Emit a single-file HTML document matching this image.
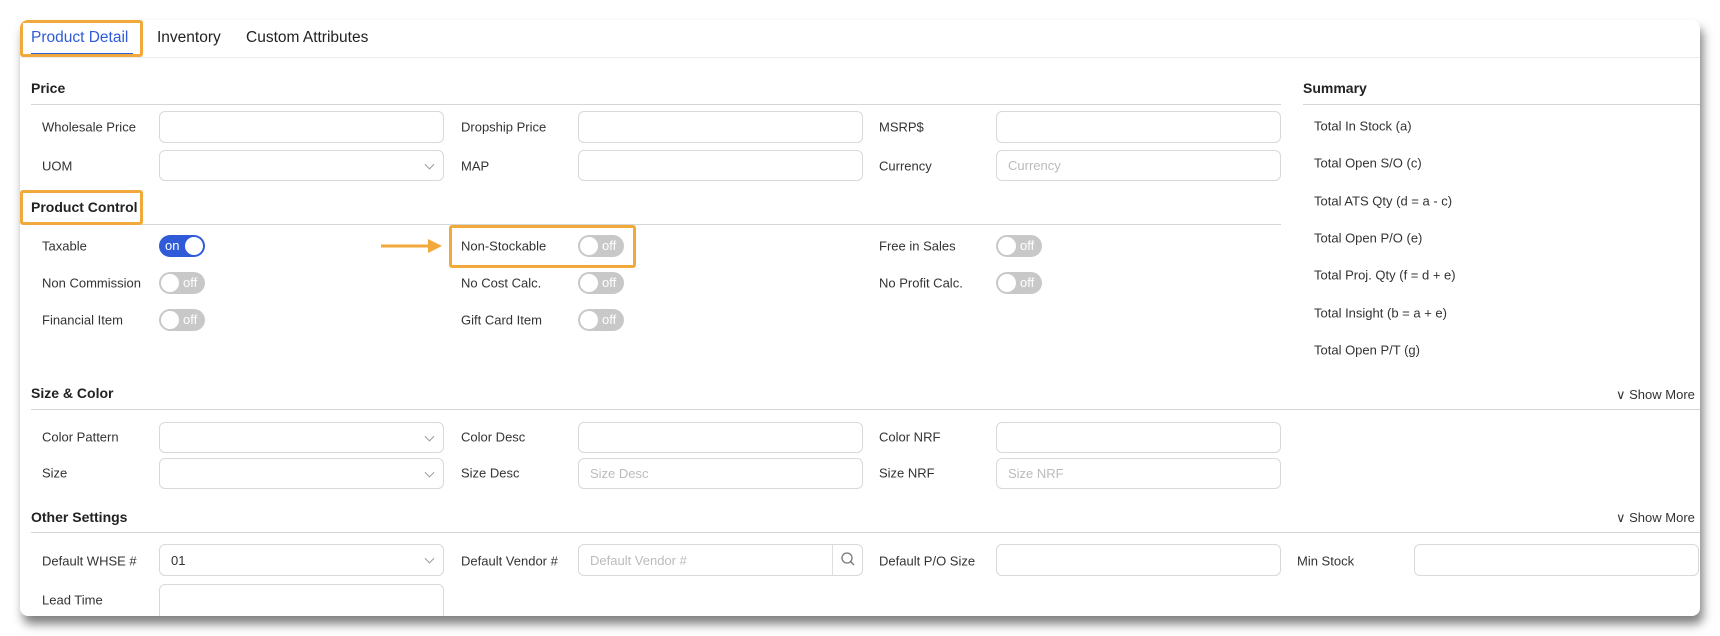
<!DOCTYPE html>
<html><head><meta charset="utf-8"><style>
*{box-sizing:border-box;margin:0;padding:0}
body{width:1720px;height:636px;background:#fff;position:relative;overflow:hidden;font-family:"Segoe UI","Liberation Sans",sans-serif;color:#333;font-size:13px}
.card{position:absolute;left:20px;top:20px;width:1680px;height:596px;background:#fff;border-radius:8px;box-shadow:3px 8px 10px rgba(0,0,0,.5);overflow:hidden}
.a{position:absolute;white-space:nowrap}
.lbl{position:absolute;font-size:13px;color:#333;transform:translateY(-50%)}
.h{position:absolute;font-weight:bold;font-size:14px;color:#222;transform:translateY(-50%)}
.line{position:absolute;height:1px;background:#d6d6d6}
.in{position:absolute;border:1px solid #d9d9d9;border-radius:6px;background:#fff;font-size:13px;color:#bbb;padding-left:11px;display:flex;align-items:center}
.chev{position:absolute;right:10px;top:50%;width:7px;height:7px;border-right:1px solid #999;border-bottom:1px solid #999;transform:translateY(-70%) rotate(45deg)}
.tg{position:absolute;width:46px;height:22px;border-radius:11px;background:#c8c8c8;color:#fff;font-size:13px;transform:translateY(-50%)}
.tg::before{content:"";position:absolute;left:2px;top:2px;width:18px;height:18px;border-radius:50%;background:#fff}
.tg span{position:absolute;left:24px;top:0;line-height:22px}
.tg.on{background:#2f5bd8}
.tg.on::before{left:26px}
.tg.on span{left:6px}
.ob{position:absolute;border:3px solid #f2a93b;border-radius:3px}
.sm{position:absolute;font-size:13px;color:#333;transform:translateY(-50%)}
</style></head><body>
<div class="card">
<div class="a" style="left:11px;top:9px;font-size:15.5px;color:#2f5bd8">Product Detail</div>
<div class="a" style="left:137px;top:9px;font-size:15.5px;color:#222">Inventory</div>
<div class="a" style="left:226px;top:9px;font-size:15.5px;color:#222">Custom Attributes</div>
<div class="a" style="left:11px;top:33px;width:102px;height:3px;background:#2f5bd8"></div>
<div class="line" style="left:0;top:37px;width:1680px;background:#ececec"></div>

<div class="h" style="left:11px;top:68px">Price</div>
<div class="line" style="left:11px;top:84px;width:1250px"></div>
<div class="h" style="left:1283px;top:68px">Summary</div>
<div class="line" style="left:1283px;top:84px;width:397px"></div>

<div class="lbl" style="left:22px;top:107px">Wholesale Price</div>
<div class="in" style="left:139px;top:91px;width:285px;height:32px"></div>
<div class="lbl" style="left:441px;top:107px">Dropship Price</div>
<div class="in" style="left:558px;top:91px;width:285px;height:32px"></div>
<div class="lbl" style="left:859px;top:107px">MSRP$</div>
<div class="in" style="left:976px;top:91px;width:285px;height:32px"></div>

<div class="lbl" style="left:22px;top:146px">UOM</div>
<div class="in" style="left:139px;top:130px;width:285px;height:31px"><i class="chev"></i></div>
<div class="lbl" style="left:441px;top:146px">MAP</div>
<div class="in" style="left:558px;top:130px;width:285px;height:31px"></div>
<div class="lbl" style="left:859px;top:146px">Currency</div>
<div class="in" style="left:976px;top:130px;width:285px;height:31px">Currency</div>

<div class="h" style="left:11px;top:187px">Product Control</div>
<div class="line" style="left:11px;top:204px;width:1250px"></div>

<div class="lbl" style="left:22px;top:226px">Taxable</div>
<div class="tg on" style="left:139px;top:226px"><span>on</span></div>
<div class="lbl" style="left:22px;top:263px">Non Commission</div>
<div class="tg" style="left:139px;top:263px"><span>off</span></div>
<div class="lbl" style="left:22px;top:300px">Financial Item</div>
<div class="tg" style="left:139px;top:300px"><span>off</span></div>

<div class="lbl" style="left:441px;top:226px">Non-Stockable</div>
<div class="tg" style="left:558px;top:226px"><span>off</span></div>
<div class="lbl" style="left:441px;top:263px">No Cost Calc.</div>
<div class="tg" style="left:558px;top:263px"><span>off</span></div>
<div class="lbl" style="left:441px;top:300px">Gift Card Item</div>
<div class="tg" style="left:558px;top:300px"><span>off</span></div>

<div class="lbl" style="left:859px;top:226px">Free in Sales</div>
<div class="tg" style="left:976px;top:226px"><span>off</span></div>
<div class="lbl" style="left:859px;top:263px">No Profit Calc.</div>
<div class="tg" style="left:976px;top:263px"><span>off</span></div>

<div class="sm" style="left:1294px;top:106px">Total In Stock (a)</div>
<div class="sm" style="left:1294px;top:143px">Total Open S/O (c)</div>
<div class="sm" style="left:1294px;top:181px">Total ATS Qty (d = a - c)</div>
<div class="sm" style="left:1294px;top:218px">Total Open P/O (e)</div>
<div class="sm" style="left:1294px;top:255px">Total Proj. Qty (f = d + e)</div>
<div class="sm" style="left:1294px;top:293px">Total Insight (b = a + e)</div>
<div class="sm" style="left:1294px;top:330px">Total Open P/T (g)</div>

<div class="h" style="left:11px;top:373px">Size &amp; Color</div>
<div class="sm" style="left:1596px;top:375px">∨ Show More</div>
<div class="line" style="left:11px;top:389px;width:1669px"></div>
<div class="lbl" style="left:22px;top:417px">Color Pattern</div>
<div class="in" style="left:139px;top:402px;width:285px;height:31px"><i class="chev"></i></div>
<div class="lbl" style="left:441px;top:417px">Color Desc</div>
<div class="in" style="left:558px;top:402px;width:285px;height:31px"></div>
<div class="lbl" style="left:859px;top:417px">Color NRF</div>
<div class="in" style="left:976px;top:402px;width:285px;height:31px"></div>
<div class="lbl" style="left:22px;top:453px">Size</div>
<div class="in" style="left:139px;top:438px;width:285px;height:31px"><i class="chev"></i></div>
<div class="lbl" style="left:441px;top:453px">Size Desc</div>
<div class="in" style="left:558px;top:438px;width:285px;height:31px">Size Desc</div>
<div class="lbl" style="left:859px;top:453px">Size NRF</div>
<div class="in" style="left:976px;top:438px;width:285px;height:31px">Size NRF</div>

<div class="h" style="left:11px;top:497px">Other Settings</div>
<div class="sm" style="left:1596px;top:498px">∨ Show More</div>
<div class="line" style="left:11px;top:512px;width:1669px"></div>
<div class="lbl" style="left:22px;top:541px">Default WHSE #</div>
<div class="in" style="left:139px;top:524px;width:285px;height:32px;color:#333">01<i class="chev"></i></div>
<div class="lbl" style="left:441px;top:541px">Default Vendor #</div>
<div class="in" style="left:558px;top:524px;width:285px;height:32px">Default Vendor #
<div style="position:absolute;right:0;top:0;width:30px;height:30px;border-left:1px solid #ddd"><svg width="30" height="30" viewBox="0 0 30 30"><circle cx="14" cy="13" r="5" fill="none" stroke="#777" stroke-width="1.3"/><path d="M17.5 16.5L21 20" stroke="#777" stroke-width="1.3"/></svg></div></div>
<div class="lbl" style="left:859px;top:541px">Default P/O Size</div>
<div class="in" style="left:976px;top:524px;width:285px;height:32px"></div>
<div class="lbl" style="left:1277px;top:541px">Min Stock</div>
<div class="in" style="left:1394px;top:524px;width:285px;height:32px"></div>
<div class="lbl" style="left:22px;top:580px">Lead Time</div>
<div class="in" style="left:139px;top:564px;width:285px;height:40px"></div>

<div class="ob" style="left:0;top:0;width:123px;height:37px"></div>
<div class="ob" style="left:0;top:170px;width:123px;height:35px"></div>
<div class="ob" style="left:429px;top:205px;width:187px;height:43px"></div>
<svg class="a" style="left:360px;top:216px" width="70" height="20" viewBox="0 0 70 20"><path d="M1 10H52" stroke="#f2a93b" stroke-width="3"/><path d="M48 3L62 10L48 17Z" fill="#f2a93b"/></svg>
</div>
</body></html>
